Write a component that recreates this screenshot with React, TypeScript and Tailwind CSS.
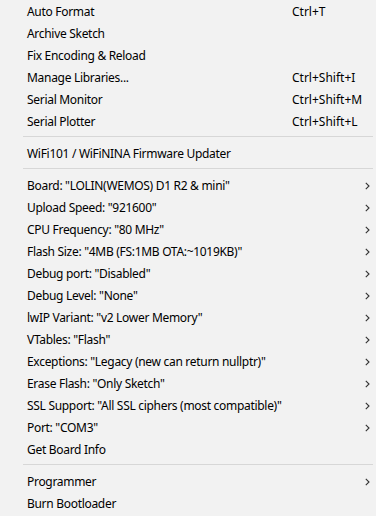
import React from 'react';

type Item =
  | { kind: 'item'; label: string; shortcut?: string; sub?: boolean }
  | { kind: 'sep' };

const items: Item[] = [
  { kind: 'item', label: 'Auto Format', shortcut: 'Ctrl+T' },
  { kind: 'item', label: 'Archive Sketch' },
  { kind: 'item', label: 'Fix Encoding & Reload' },
  { kind: 'item', label: 'Manage Libraries...', shortcut: 'Ctrl+Shift+I' },
  { kind: 'item', label: 'Serial Monitor', shortcut: 'Ctrl+Shift+M' },
  { kind: 'item', label: 'Serial Plotter', shortcut: 'Ctrl+Shift+L' },
  { kind: 'sep' },
  { kind: 'item', label: 'WiFi101 / WiFiNINA Firmware Updater' },
  { kind: 'sep' },
  { kind: 'item', label: 'Board: "LOLIN(WEMOS) D1 R2 & mini"', sub: true },
  { kind: 'item', label: 'Upload Speed: "921600"', sub: true },
  { kind: 'item', label: 'CPU Frequency: "80 MHz"', sub: true },
  { kind: 'item', label: 'Flash Size: "4MB (FS:1MB OTA:~1019KB)"', sub: true },
  { kind: 'item', label: 'Debug port: "Disabled"', sub: true },
  { kind: 'item', label: 'Debug Level: "None"', sub: true },
  { kind: 'item', label: 'lwIP Variant: "v2 Lower Memory"', sub: true },
  { kind: 'item', label: 'VTables: "Flash"', sub: true },
  { kind: 'item', label: 'Exceptions: "Legacy (new can return nullptr)"', sub: true },
  { kind: 'item', label: 'Erase Flash: "Only Sketch"', sub: true },
  { kind: 'item', label: 'SSL Support: "All SSL ciphers (most compatible)"', sub: true },
  { kind: 'item', label: 'Port: "COM3"', sub: true },
  { kind: 'item', label: 'Get Board Info' },
  { kind: 'sep' },
  { kind: 'item', label: 'Programmer', sub: true },
  { kind: 'item', label: 'Burn Bootloader' },
];

const Chevron = () => (
  <svg width="5" height="8" viewBox="0 0 5 8" className="text-[#333]">
    <path d="M0.8 0.8 L4 4 L0.8 7.2" fill="none" stroke="currentColor" strokeWidth="1.1" />
  </svg>
);

export default function App() {
  return (
    <div
      className="w-[376px] h-[516px] overflow-hidden bg-[#f2f2f2] text-black text-[12px] tracking-[-0.3px] pt-px"
      style={{ fontFamily: '"Noto Sans", "Liberation Sans", sans-serif' }}
    >
      {items.map((it, i) =>
        it.kind === 'sep' ? (
          <div key={i} className="pt-[3px] pb-[6px] pl-[23px] pr-[3px]">
            <div className="h-px bg-[#d7d7d7]" />
          </div>
        ) : (
          <div key={i} className="h-[22px] flex items-center pl-[27px] pr-[6px]">
            <span className="flex-1 whitespace-nowrap">{it.label}</span>
            {it.shortcut && (
              <span className="w-[78px] whitespace-nowrap tracking-normal">{it.shortcut}</span>
            )}
            {it.sub && <Chevron />}
          </div>
        )
      )}
    </div>
  );
}
